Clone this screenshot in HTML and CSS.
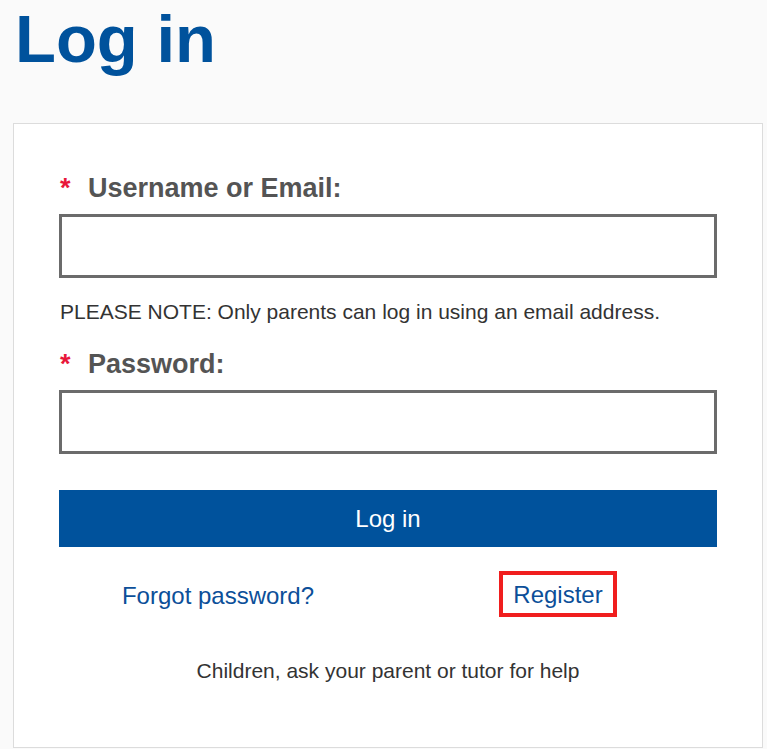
FILE: index.html
```html
<!DOCTYPE html>
<html>
<head>
<meta charset="utf-8">
<link rel="stylesheet" href="styles.css">
</head>
<body>
<h1 class="title">Log in</h1>
<div class="card">
  <form class="form">
    <label class="label"><span class="req">*</span>Username or Email:</label>
    <input class="field" type="text">
    <p class="note">PLEASE NOTE: Only parents can log in using an email address.</p>
    <label class="label"><span class="req">*</span>Password:</label>
    <input class="field" type="password">
    <button class="btn" type="button">Log in</button>
    <div class="links">
      <div class="col"><a class="link" href="#">Forgot password?</a></div>
      <div class="col"><a class="link boxed" href="#">Register</a></div>
    </div>
    <p class="help">Children, ask your parent or tutor for help</p>
  </form>
</div>
</body>
</html>
```
FILE: styles.css
```css
* { box-sizing: border-box; }
html, body { margin: 0; padding: 0; }
body {
  background: #fafafa;
  font-family: "Liberation Sans", Arial, sans-serif;
  color: #333;
  overflow: hidden;
}
.title {
  margin: 0;
  padding: 0 0 0 15px;
  height: 123px;
  font-size: 67px;
  line-height: 78px;
  font-weight: bold;
  color: #00529c;
}
.card {
  margin-left: 13px;
  width: 750px;
  height: 625px;
  background: #fff;
  border: 1px solid #dcdcdc;
  padding: 48px 45px 0 45px;
}
.form { display: flex; flex-direction: column; }
.label {
  display: flex;
  align-items: baseline;
  font-size: 27px;
  font-weight: bold;
  color: #545454;
  line-height: 32px;
  margin-bottom: 10px;
}
.req {
  color: #e8173a;
  width: 29px;
  padding-left: 1px;
  font-size: 27px;
}
.field {
  width: 658px;
  height: 64px;
  border: 3px solid #6b6b6b;
  background: #fff;
  margin: 0;
}
.note {
  margin: 22px 0 24px 1px;
  font-size: 21px;
  line-height: 24px;
  color: #333;
}
.btn {
  margin-top: 36px;
  height: 57px;
  border: 0;
  background: #00529c;
  color: #fff;
  font-family: "Liberation Sans", Arial, sans-serif;
  font-size: 24px;
}
.links {
  display: flex;
  margin-top: 25px;
  height: 44px;
}
.col {
  flex: 1;
  display: flex;
  justify-content: center;
  align-items: center;
}
.col:first-child { padding-right: 12px; }
.col:last-child { padding-left: 10px; }
.link {
  color: #0c4f99;
  text-decoration: none;
  font-size: 24px;
  line-height: 28px;
}
.col:first-child .link { padding-top: 3px; }
.boxed {
  border: 4px solid #f01e1e;
  padding: 6px 10px 4px 10px;
}
.help {
  margin: 43px 0 0 0;
  text-align: center;
  font-size: 21px;
  line-height: 24px;
  color: #333;
}
```
